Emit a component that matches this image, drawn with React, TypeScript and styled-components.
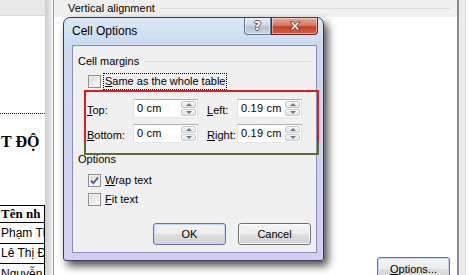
import styled, { createGlobalStyle } from "styled-components";

const GlobalStyle = createGlobalStyle`
  html, body { margin: 0; padding: 0; }
  body {
    width: 469px;
    height: 275px;
    overflow: hidden;
    background: #fff;
    font-family: "Liberation Sans", Arial, sans-serif;
    font-size: 11px;
    color: #000;
  }
`;

const Screen = styled.div`
  position: relative;
  display: flex;
  width: 469px;
  height: 275px;
  overflow: hidden;
`;

// word document peeking out on the left
const DocPane = styled.div`
  width: 45px;
  flex-shrink: 0;
  background: #fff;
  overflow: hidden;
`;

const DocRuler = styled.div`
  height: 15px;
  background: #e8e8e8;
  border-bottom: 1px solid #d8d8d8;
`;

const DottedRule = styled.div`
  margin-top: 97px;
  border-bottom: 1px dotted #222;
`;

const DocHeading = styled.div`
  margin-top: 19px;
  height: 18px;
  line-height: 18px;
  font-family: "Liberation Serif", "Times New Roman", serif;
  font-weight: bold;
  font-size: 16px;
  white-space: nowrap;
  padding-left: 1px;
`;

const DocTable = styled.div`
  margin-top: 54px;
  border-top: 1px solid #000;
  border-right: 1px solid #000;
`;

const DocRow = styled.div<{ $h: number; $head?: boolean }>`
  height: ${(p) => p.$h}px;
  line-height: ${(p) => p.$h}px;
  border-bottom: 1px solid #000;
  white-space: nowrap;
  overflow: hidden;
  padding-left: 1px;
  font-family: ${(p) => (p.$head ? `"Liberation Serif", serif` : `"Liberation Sans", Arial, sans-serif`)};
  font-weight: ${(p) => (p.$head ? "bold" : "normal")};
  font-size: ${(p) => (p.$head ? 13 : 12)}px;
`;

const DocEdge = styled.div`
  width: 8px;
  flex-shrink: 0;
  background: linear-gradient(90deg, #cdcdcd, #dedede 55%, #f8f8f8);
  border-right: 1px solid #9c9c9c;
`;

// the Table Properties dialog underneath
const BackDialog = styled.div`
  width: 403px;
  flex-shrink: 0;
  display: flex;
  flex-direction: column;
  border-right: 2px solid #8a8a8a;
`;

const BackStrip = styled.div`
  height: 17px;
  background: #f0f0f0;
  padding: 0 7px 0 14px;
  display: flex;
  align-items: flex-start;
`;

const GroupHeader = styled.div<{ $lined?: boolean }>`
  display: flex;
  align-items: center;
  gap: 5px;
  height: 16px;
  white-space: nowrap;
  &::after {
    content: "";
    flex: 1;
    border-top: 1px solid ${(p) => (p.$lined ? "#d5dfe5" : "transparent")};
  }
`;

const BackHeader = styled(GroupHeader)`
  flex: 1;
`;

const BackBody = styled.div`
  flex: 1;
  background: #fff;
  display: flex;
  justify-content: flex-end;
  align-items: flex-end;
  padding-right: 7px;
`;

const RightStrip = styled.div`
  flex: 1;
  background: #ececec;
  border-right: 1px solid #d6d6d6;
  margin-right: 3px;
`;

const PushButton = styled.button<{ $default?: boolean }>`
  width: 73px;
  height: 22px;
  padding: 0;
  font: inherit;
  color: #000;
  border: 1px solid ${(p) => (p.$default ? "#6e69c2" : "#707070")};
  border-radius: 3px;
  background: linear-gradient(180deg, #f4f4f4 0%, #ececec 48%, #dedede 52%, #d2d2d2 100%);
  box-shadow: inset 0 0 0 1px ${(p) => (p.$default ? "#c9d3f2" : "#fbfbfb")};
`;

const OptionsButton = styled(PushButton)`
  margin-bottom: -6px;
  height: 24px;
`;

// Cell Options window
const Window = styled.div`
  position: absolute;
  left: 63px;
  top: 17px;
  width: 261px;
  height: 244px;
  box-sizing: border-box;
  display: flex;
  flex-direction: column;
  border: 1px solid #3b3d52;
  border-radius: 7px 7px 3px 3px;
  background: linear-gradient(180deg, #dae7f6 0px, #cadbf1 27px, #cfd4f2 55%, #d3cef4 100%);
  box-shadow: 4px 5px 8px rgba(0, 0, 0, 0.7);
`;

const TitleBar = styled.div`
  height: 27px;
  display: flex;
  align-items: flex-start;
  padding-right: 5px;
`;

const Title = styled.div`
  flex: 1;
  padding-left: 8px;
  line-height: 27px;
  font-size: 12px;
`;

const CaptionButton = styled.div<{ $close?: boolean }>`
  height: 17px;
  width: ${(p) => (p.$close ? 47 : 27)}px;
  box-sizing: border-box;
  display: flex;
  align-items: center;
  justify-content: center;
  border: 1px solid ${(p) => (p.$close ? "#5e2a28" : "#66748c")};
  border-top: none;
  border-radius: ${(p) => (p.$close ? "0 0 4px 0" : "0 0 0 4px")};
  background: ${(p) =>
    p.$close
      ? "linear-gradient(180deg, #e6a797 0%, #d57a66 45%, #c2412c 55%, #d05f45 100%)"
      : "linear-gradient(180deg, #e3ebf5 0%, #cfdbea 45%, #b3c2d6 55%, #c5d3e4 100%)"};
  box-shadow: inset 0 0 0 1px rgba(255, 255, 255, 0.45);
`;

const HelpGlyph = styled.span`
  font-family: "DejaVu Sans", sans-serif;
  font-weight: bold;
  font-size: 12px;
  color: #fff;
  text-shadow: 1px 0 0 #555, -1px 0 0 #555, 0 1px 0 #555, 0 -1px 0 #555;
`;

const Client = styled.div`
  position: relative;
  flex: 1;
  margin: 0 6px 7px 8px;
  border: 1px solid #8c8db4;
  background: #f0f0f0;
  display: flex;
  flex-direction: column;
`;

const MarginsHeader = styled(GroupHeader)`
  margin-top: 7px;
  padding: 0 5px;
`;

const OptionsHeader = styled(GroupHeader)`
  margin-top: 8px;
  padding: 0 5px;
`;

const CheckRow = styled.div<{ $top: number }>`
  display: flex;
  align-items: center;
  height: 17px;
  margin-top: ${(p) => p.$top}px;
  padding-left: 15px;
`;

const CheckBox = styled.span`
  width: 13px;
  height: 13px;
  box-sizing: border-box;
  flex-shrink: 0;
  border: 1px solid #8e8f8f;
  background: linear-gradient(135deg, #d8d8d8, #fbfbfb);
  box-shadow: inset 0 0 0 1px #f2f2f2;
  display: flex;
  align-items: center;
  justify-content: center;
`;

const CheckLabel = styled.span<{ $focus?: boolean }>`
  margin-left: 2px;
  padding: 1px 1px;
  line-height: 13px;
  border: 1px dotted ${(p) => (p.$focus ? "#000" : "transparent")};
  white-space: nowrap;
`;

const SpinGrid = styled.div`
  margin-top: 9px;
  padding-left: 14px;
  display: grid;
  grid-template-columns: 46px 65px 39px 65px;
  row-gap: 6px;
  grid-auto-rows: 19px;
  align-items: center;
`;

const SpinLabel = styled.span<{ $gap?: boolean }>`
  padding-left: ${(p) => (p.$gap ? 9 : 0)}px;
  padding-top: 3px;
`;

const SpinBox = styled.div`
  display: flex;
  height: 19px;
  box-sizing: border-box;
  border: 1px solid;
  border-color: #abadb3 #dbdfe6 #e3e9ef #e2e3ea;
  background: #fff;
`;

const SpinValue = styled.span`
  flex: 1;
  padding-left: 3px;
  line-height: 17px;
  letter-spacing: 0.2px;
  white-space: nowrap;
`;

const SpinButtons = styled.div`
  width: 15px;
  display: flex;
  flex-direction: column;
  gap: 1px;
  padding: 1px 1px 1px 0;
`;

const SpinButton = styled.div`
  flex: 1;
  border: 1px solid #c9c9c9;
  border-radius: 2px;
  background: linear-gradient(180deg, #f7f7f7, #e3e3e3);
  display: flex;
  align-items: center;
  justify-content: center;
`;

const Arrow = styled.span<{ $down?: boolean }>`
  width: 0;
  height: 0;
  border-left: 3px solid transparent;
  border-right: 3px solid transparent;
  ${(p) => (p.$down ? "border-top: 3px solid #6a7894;" : "border-bottom: 3px solid #6a7894;")}
`;

const ButtonRow = styled.div`
  margin-top: 15px;
  display: flex;
  justify-content: flex-end;
  gap: 12px;
  padding-right: 5px;
`;

// hand-drawn highlight boxes from the screenshot
const RedMark = styled.div`
  position: absolute;
  left: 20px;
  top: 72px;
  width: 235px;
  height: 52px;
  box-sizing: border-box;
  border: 2px solid #dd1c24;
  border-bottom: none;
  pointer-events: none;
`;

const OliveMark = styled.div`
  position: absolute;
  left: 20px;
  top: 124px;
  width: 235px;
  height: 13px;
  box-sizing: border-box;
  border: 2px solid #5d6a33;
  border-top: none;
  pointer-events: none;
`;

const Spin = ({ value }: { value: string }) => (
  <SpinBox>
    <SpinValue>{value}</SpinValue>
    <SpinButtons>
      <SpinButton><Arrow /></SpinButton>
      <SpinButton><Arrow $down /></SpinButton>
    </SpinButtons>
  </SpinBox>
);

const Tick = () => (
  <svg width="9" height="9" viewBox="0 0 9 9">
    <path d="M1 4.6 L3.4 7.2 L8 1.4" fill="none" stroke="#4b5b8e" strokeWidth="1.7" />
  </svg>
);

const CloseX = () => (
  <svg width="12" height="10" viewBox="0 0 12 10">
    <path
      d="M1 1 H4 L6 3.5 L8 1 H11 L7.6 5 L11 9 H8 L6 6.5 L4 9 H1 L4.4 5 Z"
      fill="#fff"
      stroke="#6b2a22"
      strokeWidth="0.8"
    />
  </svg>
);

export default function App() {
  return (
    <>
      <GlobalStyle />
      <Screen>
        <DocPane>
          <DocRuler />
          <DottedRule />
          <DocHeading>T ĐỘ</DocHeading>
          <DocTable>
            <DocRow $h={16} $head>Tên nh</DocRow>
            <DocRow $h={20}>Phạm Th</DocRow>
            <DocRow $h={19}>Lê Thị Đ</DocRow>
            <DocRow $h={20}>Nguyễn</DocRow>
          </DocTable>
        </DocPane>
        <DocEdge />
        <BackDialog>
          <BackStrip>
            <BackHeader $lined>Vertical alignment</BackHeader>
          </BackStrip>
          <BackBody>
            <OptionsButton $default>
              <u>O</u>ptions...
            </OptionsButton>
          </BackBody>
        </BackDialog>
        <RightStrip />

        <Window>
          <TitleBar>
            <Title>Cell Options</Title>
            <CaptionButton><HelpGlyph>?</HelpGlyph></CaptionButton>
            <CaptionButton $close><CloseX /></CaptionButton>
          </TitleBar>
          <Client>
            <MarginsHeader $lined>Cell margins</MarginsHeader>
            <CheckRow $top={4}>
              <CheckBox />
              <CheckLabel $focus><u>S</u>ame as the whole table</CheckLabel>
            </CheckRow>
            <SpinGrid>
              <SpinLabel><u>T</u>op:</SpinLabel>
              <Spin value="0 cm" />
              <SpinLabel $gap><u>L</u>eft:</SpinLabel>
              <Spin value="0.19 cm" />
              <SpinLabel><u>B</u>ottom:</SpinLabel>
              <Spin value="0 cm" />
              <SpinLabel $gap><u>R</u>ight:</SpinLabel>
              <Spin value="0.19 cm" />
            </SpinGrid>
            <OptionsHeader>Options</OptionsHeader>
            <CheckRow $top={5}>
              <CheckBox><Tick /></CheckBox>
              <CheckLabel><u>W</u>rap text</CheckLabel>
            </CheckRow>
            <CheckRow $top={2}>
              <CheckBox />
              <CheckLabel><u>F</u>it text</CheckLabel>
            </CheckRow>
            <ButtonRow>
              <PushButton $default>OK</PushButton>
              <PushButton>Cancel</PushButton>
            </ButtonRow>
          </Client>
          <RedMark />
          <OliveMark />
        </Window>
      </Screen>
    </>
  );
}
